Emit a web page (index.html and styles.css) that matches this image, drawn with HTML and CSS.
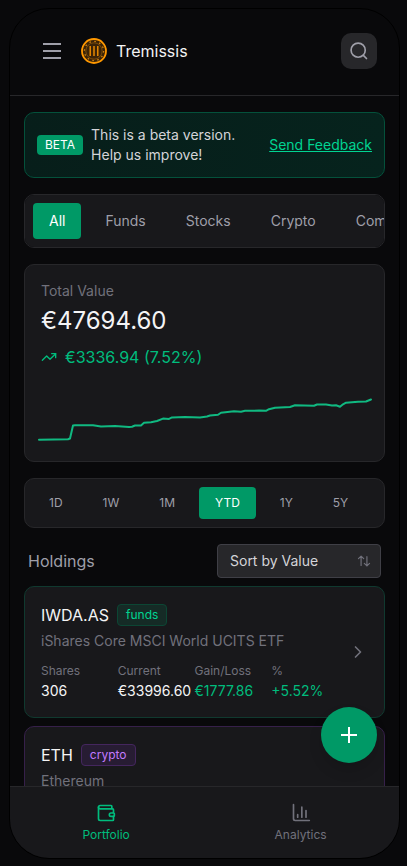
FILE: index.html
```html
<!DOCTYPE html>
<html lang="en">
<head>
<meta charset="utf-8">
<meta name="viewport" content="width=device-width, initial-scale=1">
<title>Tremissis</title>
<link rel="stylesheet" href="styles.css">
</head>
<body>
<div class="app">
  <header class="header">
    <button class="menu-button" aria-label="Menu">
      <svg class="icon-24" viewBox="0 0 24 24"><path d="M3 5h18M3 12h18M3 19h18"/></svg>
    </button>
    <div class="brand">
      <svg class="logo" viewBox="0 0 26 26" aria-hidden="true">
        <circle cx="13" cy="13" r="12" fill="#3a2307" stroke="#ff9800" stroke-width="1.8"/>
        <circle cx="13" cy="13" r="9.6" fill="none" stroke="#d08210" stroke-width="1.3" stroke-dasharray="1.6 3.427"/>
        <circle cx="13" cy="13" r="8.2" fill="none" stroke="#8a560b" stroke-width="0.8"/>
        <path d="M9.2 8v10M13 8v10M16.8 8v10" fill="none" stroke="#ff9800" stroke-width="1.3"/>
      </svg>
      <span class="brand-name">Tremissis</span>
    </div>
    <button class="search-button" aria-label="Search">
      <svg class="icon-20" viewBox="0 0 24 24"><circle cx="11" cy="11" r="8.5"/><path d="m21 21-3.8-3.8"/></svg>
    </button>
  </header>

  <main class="content">
    <section class="banner">
      <span class="banner-badge">BETA</span>
      <p class="banner-text">This is a beta version. Help us improve!</p>
      <a class="banner-link" href="#feedback">Send Feedback</a>
    </section>

    <nav class="tabs">
      <button class="tab active">All</button>
      <button class="tab">Funds</button>
      <button class="tab">Stocks</button>
      <button class="tab">Crypto</button>
      <button class="tab">Commodities</button>
    </nav>

    <section class="card total">
      <div class="total-label">Total Value</div>
      <div class="total-value">€47694.60</div>
      <div class="total-gain">
        <svg class="icon-16" viewBox="0 0 24 24"><path d="M16 7h6v6"/><path d="m22 7-8.500 8.500-5-5L2 17"/></svg>
        <span>€3336.94 (7.52%)</span>
      </div>
      <svg class="chart" viewBox="0 0 335 60" preserveAspectRatio="none" aria-hidden="true">
        <polyline points="2,54.700 31,54.300 33,53.500 36,40.500 38,40.200 56,40.200 64,41.500 78,41 92,42 95,41.700 98,40.500 104,40.400 107,37.800 114,37.200 120,36 126,33.600 132,33.900 135,32.400 148,32 163,32.500 170,31.500 173,30.500 181,29.800 184,27.700 197,26.200 204,26.800 208,25.800 222,25.600 229,25.800 232,24.200 238,22.800 253,22 258,20.300 277,20.700 280,19.500 289,19.500 295,20.500 299,20.200 303,21.700 306,19.300 309,17.700 321,16.700 329,16.500 334,14.500"/>
      </svg>
    </section>

    <nav class="tabs periods">
      <button class="tab">1D</button>
      <button class="tab">1W</button>
      <button class="tab">1M</button>
      <button class="tab active">YTD</button>
      <button class="tab">1Y</button>
      <button class="tab">5Y</button>
    </nav>

    <section class="holdings">
      <div class="holdings-head">
        <label class="holdings-title" for="sort">Holdings</label>
        <div class="sort">
          <select id="sort" class="sort-select"><option>Sort by Value</option></select>
          <svg class="sort-icon" viewBox="0 0 24 24"><path d="m2.500 8 4.500-4.500L11.500 8M7 3.500v16M21.500 16 17 20.500 12.500 16M17 20.500v-16"/></svg>
        </div>
      </div>

      <article class="card holding funds">
        <div class="holding-body">
          <div class="holding-top"><span class="symbol">IWDA.AS</span><span class="tag">funds</span></div>
          <div class="holding-name">iShares Core MSCI World UCITS ETF</div>
          <dl class="stats">
            <div><dt>Shares</dt><dd>306</dd></div>
            <div><dt>Current</dt><dd>€33996.60</dd></div>
            <div><dt>Gain/Loss</dt><dd class="gain">€1777.86</dd></div>
            <div><dt>%</dt><dd class="gain">+5.52%</dd></div>
          </dl>
        </div>
        <svg class="icon-20 chevron" viewBox="0 0 24 24"><path d="m9 18 6-6-6-6"/></svg>
      </article>

      <article class="card holding crypto">
        <div class="holding-body">
          <div class="holding-top"><span class="symbol">ETH</span><span class="tag">crypto</span></div>
          <div class="holding-name">Ethereum</div>
        </div>
        <svg class="icon-20 chevron" viewBox="0 0 24 24"><path d="m9 18 6-6-6-6"/></svg>
      </article>
    </section>
  </main>

  <button class="fab" aria-label="Add holding">
    <svg class="icon-24" viewBox="0 0 24 24"><path d="M4 12h16M12 4v16"/></svg>
  </button>

  <nav class="bottom-nav">
    <a class="nav-item active" href="#portfolio">
      <svg class="icon-20" viewBox="0 0 24 24"><path d="M19 7V4a1 1 0 0 0-1-1H5a2 2 0 0 0 0 4h15a1 1 0 0 1 1 1v4h-3a2 2 0 0 0 0 4h3a1 1 0 0 0 1-1v-2a1 1 0 0 0-1-1"/><path d="M3 5v14a2 2 0 0 0 2 2h15a1 1 0 0 0 1-1v-4"/></svg>
      <span>Portfolio</span>
    </a>
    <a class="nav-item" href="#analytics">
      <svg class="icon-20" viewBox="0 0 24 24"><path d="M3 2v17a2 2 0 0 0 2 2h17M18 17V9M13 17V5M8 17v-3"/></svg>
      <span>Analytics</span>
    </a>
  </nav>
</div>
</body>
</html>
```
FILE: styles.css
```css
* { box-sizing: border-box; margin: 0; }

body {
  height: 100vh;
  padding: 8px 7px 7px 9px;
  background: #09090b;
  color: #f4f4f5;
  font-family: Inter, "Liberation Sans", sans-serif;
  font-size: 16px;
  line-height: 24px;
}

button, select { font: inherit; color: inherit; border: 0; background: none; padding: 0; }
a { color: inherit; }
svg { display: block; flex: none; fill: none; stroke: currentColor; stroke-width: 2; stroke-linecap: round; stroke-linejoin: round; }
.icon-16 { width: 16px; height: 16px; }
.icon-20 { width: 20px; height: 20px; }
.icon-24 { width: 24px; height: 24px; }

.app {
  position: relative;
  display: flex;
  flex-direction: column;
  height: 100%;
  border: 1px solid #000;
  border-radius: 40px;
  overflow: hidden;
}

.header {
  display: flex;
  align-items: center;
  padding: 24px 22px 26px 24px;
  border-bottom: 1px solid #27272a;
}
.menu-button { padding: 6px; color: #9f9fa9; }
.menu-button svg { stroke-linecap: butt; }
.brand { display: flex; flex: 1; align-items: center; gap: 9px; margin-left: 11px; }
.logo { width: 26px; height: 26px; stroke-linecap: butt; }
.search-button { padding: 8px; border-radius: 10px; background: #27272a; color: #9f9fa9; }

.content {
  display: flex;
  flex: 1;
  flex-direction: column;
  gap: 16px;
  min-height: 0;
  padding: 16px 14px 0;
  overflow-y: auto;
  scrollbar-width: none;
}
.content > * { flex: none; }

.card, .tabs { border: 1px solid #27272a; border-radius: 10px; background: #18181b; }

.banner {
  display: flex;
  align-items: center;
  gap: 8px;
  padding: 12px;
  border: 1px solid #04513b;
  border-radius: 10px;
  background: linear-gradient(90deg, #071e1a, #06231d);
  font-size: 14px;
  line-height: 20px;
}
.banner-badge {
  padding: 2px 8px;
  border-radius: 4px;
  background: #009966;
  color: #fff;
  font-size: 12px;
  line-height: 16px;
}
.banner-text { flex: 1; padding-right: 16px; color: #d4d4d8; }
.banner-link { color: #00d492; white-space: nowrap; }

.tabs { display: flex; gap: 8px; padding: 8px; overflow-x: auto; scrollbar-width: none; }
.tab {
  flex: none;
  padding: 8px 16px;
  border-radius: 4px;
  color: #9f9fa9;
  font-size: 14px;
  line-height: 20px;
}
.tab.active { background: #009966; color: #fff; }
.periods .tab { font-size: 12px; line-height: 16px; }

.total { padding: 16px; }
.total-label { color: #71717b; font-size: 14px; line-height: 20px; }
.total-value { margin: 4px 0 8px; font-size: 24px; line-height: 32px; }
.total-gain { display: flex; align-items: center; gap: 8px; color: #00bc7d; }
.chart { width: calc(100% + 8px); height: 60px; margin: 16px -4px 0; color: #10b981; }
.chart polyline { vector-effect: non-scaling-stroke; }

.holdings { display: flex; flex-direction: column; gap: 8px; }
.holdings-head { display: flex; align-items: center; justify-content: space-between; padding: 0 4px; }
.holdings-title { color: #9f9fa9; }
.sort { position: relative; }
.sort-select {
  display: block;
  width: 164px;
  height: 34px;
  padding: 0 12px;
  border: 1px solid #3f3f46;
  border-radius: 4px;
  background: #27272a;
  color: #d4d4d8;
  font-size: 14px;
  appearance: none;
}
.sort-icon { position: absolute; top: 10px; right: 10px; width: 14px; height: 14px; color: #71717b; pointer-events: none; }

.holding { display: flex; align-items: center; gap: 8px; padding: 16px; }
.holding-body { flex: 1; min-width: 0; }
.holding-top { display: flex; align-items: center; gap: 8px; }
.holding-name { margin-top: 4px; color: #71717b; font-size: 14px; line-height: 20px; }
.tag { padding: 2px 8px; border: 1px solid; border-radius: 4px; font-size: 12px; line-height: 16px; }
.funds { border-color: #10392f; }
.funds .tag { border-color: #0c4634; background: #152b26; color: #00d492; }
.crypto { min-height: 132px; align-items: flex-start; border-color: #36204a; }
.crypto .tag { border-color: #44265e; background: #271c33; color: #c27aff; }
.crypto .chevron { align-self: center; }
.stats { display: grid; grid-template-columns: repeat(4, minmax(0, 1fr)); gap: 8px; margin-top: 12px; }
.stats dt { margin-bottom: 2px; color: #71717b; font-size: 12px; line-height: 16px; }
.stats dd { margin: 0; font-size: 14px; line-height: 20px; white-space: nowrap; }
.stats .gain { color: #00bc7d; }
.chevron { color: #71717b; }

.fab {
  position: absolute;
  right: 22px;
  bottom: 95px;
  padding: 16px;
  border-radius: 50%;
  background: #009966;
  color: #fff;
  box-shadow: 0 8px 14px rgba(0, 0, 0, 0.12);
}
.fab svg { stroke-linecap: butt; }

.bottom-nav {
  display: flex;
  justify-content: space-around;
  padding: 16px 0 15px;
  border-top: 1px solid #27272a;
  background: #18181b;
}
.nav-item {
  display: flex;
  flex-direction: column;
  align-items: center;
  gap: 4px;
  padding: 0 16px;
  color: #71717b;
  font-size: 12px;
  line-height: 16px;
  text-decoration: none;
}
.nav-item.active { color: #00bc7d; }
```
